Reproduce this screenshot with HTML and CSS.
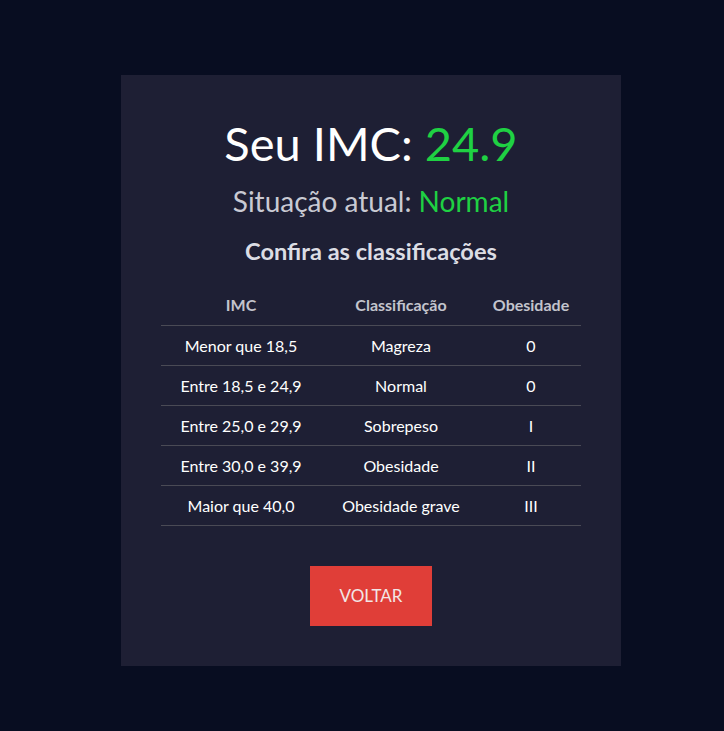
FILE: index.html
```html
<!DOCTYPE html>
<html lang="pt-BR">
<head>
  <meta charset="UTF-8" />
  <meta name="viewport" content="width=device-width, initial-scale=1.0"/>
  <title>Calculadora de IMC</title>
  <link rel="stylesheet" href="styles.css">
</head>
<body>
  <div class="card">
    <h1 class="result">Seu IMC: <span class="ok">24.9</span></h1>
    <h2 class="status">Situação atual: <span class="ok">Normal</span></h2>
    <h3 class="subtitle">Confira as classificações</h3>

    <table class="table">
      <thead>
        <tr><th class="c1">IMC</th><th class="c2">Classificação</th><th class="c3">Obesidade</th></tr>
      </thead>
      <tbody>
        <tr><td>Menor que 18,5</td><td>Magreza</td><td>0</td></tr>
        <tr><td>Entre 18,5 e 24,9</td><td>Normal</td><td>0</td></tr>
        <tr><td>Entre 25,0 e 29,9</td><td>Sobrepeso</td><td>I</td></tr>
        <tr><td>Entre 30,0 e 39,9</td><td>Obesidade</td><td>II</td></tr>
        <tr><td>Maior que 40,0</td><td>Obesidade grave</td><td>III</td></tr>
      </tbody>
    </table>

    <button class="back">VOLTAR</button>
  </div>
</body>
</html>
```

FILE: styles.css
```css
body {
  margin: 0;
  padding: 75px 0 64px 18px;
  background-color: #080d21;
  font-family: Lato, "Open Sans", sans-serif;
  color: #fff;
}

.card {
  width: 420px;
  margin: 0 auto;
  padding: 40px 40px 40px;
  background-color: #1e1f34;
  text-align: center;
  display: flex;
  flex-direction: column;
  align-items: center;
}

.ok { color: #1fd143; }

.result {
  margin: 0;
  font-size: 47px;
  font-weight: 400;
  line-height: 57.6px;
}

.status {
  margin: 12px 0 0;
  font-size: 28px;
  font-weight: 400;
  line-height: 1.2;
  color: #c9cad3;
}

.subtitle {
  margin: 20px 0 0;
  font-size: 23.6px;
  font-weight: 700;
  line-height: 27.6px;
  color: #dcdde4;
}

.table {
  width: 420px;
  margin-top: 19px;
  border-collapse: collapse;
  font-size: 16px;
}

.table th {
  height: 40px;
  padding: 0;
  font-weight: 700;
  color: #c3c4cd;
  border-bottom: 1px solid #4a4a55;
}

.table td {
  height: 39px;
  padding: 0;
  color: #fff;
  border-bottom: 1px solid #4a4a55;
}

.c1 { width: 160px; }
.c2 { width: 160px; }
.c3 { width: 100px; }

.back {
  margin-top: 40px;
  width: 122px;
  height: 60px;
  border: none;
  background-color: #e03e38;
  color: #f2e6e6;
  font-family: Lato, sans-serif;
  font-size: 17px;
  cursor: pointer;
}
```
